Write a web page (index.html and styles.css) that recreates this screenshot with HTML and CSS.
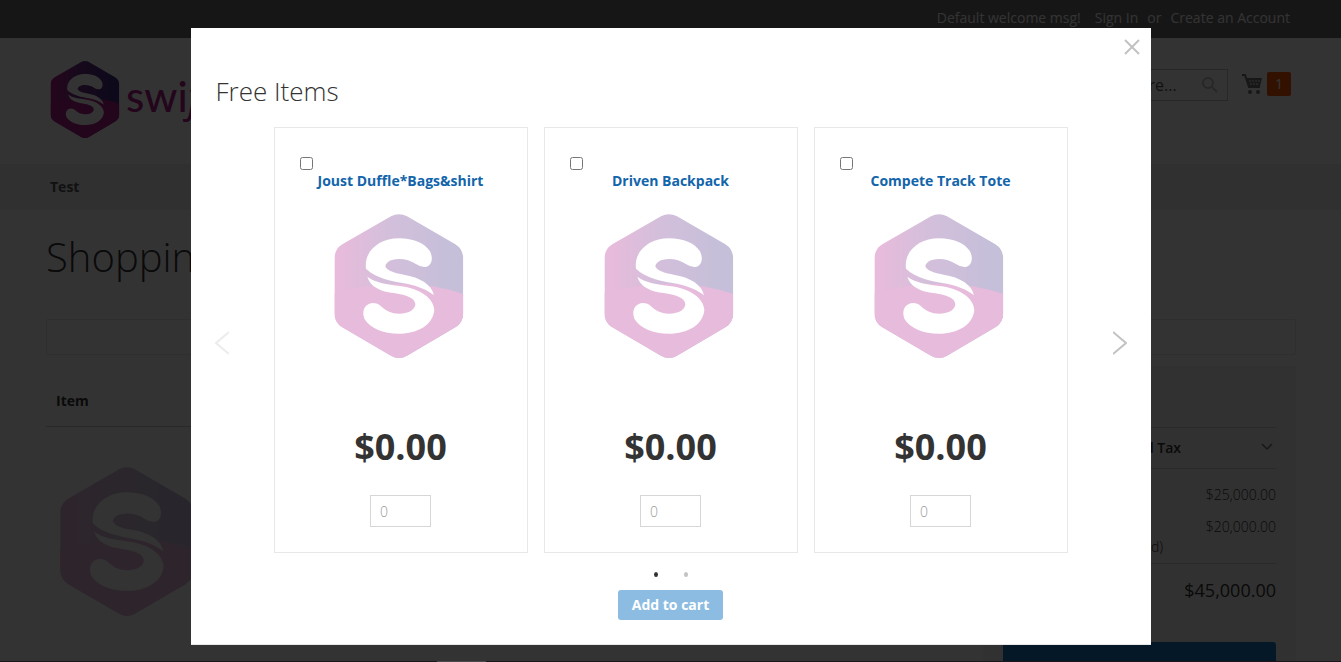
FILE: index.html
```html
<!DOCTYPE html>
<html lang="en">
<head>
  <meta charset="UTF-8">
  <meta name="viewport" content="width=device-width, initial-scale=1.0">
  <title>Shopping Cart</title>
  <link rel="stylesheet" href="styles.css">
</head>
<body>
  <!-- shared shapes -->
  <svg class="sprite" width="0" height="0" aria-hidden="true">
    <defs>
      <linearGradient id="logo-top" x1="0" y1="0" x2="1" y2="0">
        <stop offset="0.05" stop-color="#b2208a"/>
        <stop offset="0.4" stop-color="#74308a"/>
        <stop offset="0.9" stop-color="#412d84"/>
      </linearGradient>
      <clipPath id="logo-hex">
        <path d="M184 35 Q208 22 232 35 L377 119 Q401 134 401 164 V324 Q401 353 377 368 L232 453 Q208 467 184 453 L38 368 Q14 353 14 324 V164 Q14 134 38 119 Z"/>
      </clipPath>
    </defs>
    <symbol id="logo" viewBox="14 28 388 432">
      <g clip-path="url(#logo-hex)">
        <rect x="14" y="28" width="388" height="432" fill="url(#logo-top)"/>
        <path fill="#b2208a" d="M14 266 Q110 237 208 237 Q310 237 402 268 V460 H14 Z"/>
        <path fill="#fff" d="M109 192 C102 140 148 101 208 101 C252 101 285 116 301 140 C314 166 302 187 284 187 Q272 187 260 179 C243 168 228 163 208 163 C182 163 168 174 167 185 C172 200 200 206 222 210 C272 218 307 240 313 272 C290 254 268 246 235 238 C190 230 140 222 109 192 Z"/>
        <path fill="#fff" d="M113 216 C140 236 172 238 210 244 C275 252 311 282 314 315 C311 360 264 387 208 387 C160 387 120 370 104 342 C94 314 110 295 130 295 Q144 295 154 305 C170 320 186 327 208 327 C240 327 257 313 257 298 C254 279 230 272 196 266 C150 260 122 246 113 216 Z"/>
      </g>
    </symbol>
  </svg>

  <div class="page">
    <div class="panel">
      <span>Default welcome msg!</span>
      <a href="#">Sign In</a>
      <span class="or">or</span>
      <a href="#">Create an Account</a>
    </div>

    <header class="header">
      <a class="brand" href="#">
        <svg class="brand-icon"><use href="#logo"/></svg>
        <span class="brand-name">swi<i>f</i>t</span>
      </a>
      <div class="header-tools">
        <div class="search">
          <input type="text" placeholder="Search entire store here..." aria-label="Search">
          <button type="button" aria-label="Search">
            <svg width="16" height="16" viewBox="0 0 16 16" fill="none" stroke="#c2c2c2" stroke-width="2">
              <circle cx="6" cy="6" r="5"/>
              <path d="M10 10 L15 15"/>
            </svg>
          </button>
        </div>
        <a class="minicart" href="#">
          <svg width="20" height="22" viewBox="0 0 20 22">
            <path d="M0 2 H3 L7 14 H18" fill="none" stroke="#757575" stroke-width="2"/>
            <path d="M4 5 H20 L18 13 H7 Z" fill="#757575"/>
            <path d="M7 8 H18 M8 11 H17" stroke="#fff" stroke-width="1" stroke-dasharray="2 1"/>
            <circle cx="8" cy="19" r="2" fill="#757575"/>
            <circle cx="16" cy="19" r="2" fill="#757575"/>
          </svg>
          <span class="counter">1</span>
        </a>
      </div>
    </header>

    <nav class="nav"><a href="#">Test</a></nav>

    <main class="main">
      <h1>Shopping Cart</h1>
      <div class="message"></div>
      <div class="cart">
        <table class="items">
          <tr><th>Item</th></tr>
          <tr><td><svg class="item-photo"><use href="#logo"/></svg></td></tr>
        </table>
        <aside class="summary">
          <h2>Summary</h2>
          <button type="button" class="estimate">
            Estimate Shipping and Tax
            <svg width="12" height="8" viewBox="0 0 12 8" fill="none" stroke="#757575" stroke-width="1.5"><path d="M1 1 L6 6 L11 1"/></svg>
          </button>
          <table class="totals">
            <tr><th>Subtotal</th><td>$25,000.00</td></tr>
            <tr><th>Shipping<br>(Flat Rate Options - Fixed)</th><td>$20,000.00</td></tr>
            <tr class="grand"><th>Order Total</th><td>$45,000.00</td></tr>
          </table>
          <button type="button" class="checkout" aria-label="Proceed to Checkout"></button>
        </aside>
      </div>
    </main>
  </div>

  <div class="overlay">
    <div class="modal" role="dialog" aria-labelledby="modal-title">
      <button type="button" class="close" aria-label="Close">
        <svg width="16" height="16" viewBox="0 0 16 16" stroke="#c2c2c2" stroke-width="2"><path d="M1 1 L15 15 M15 1 L1 15"/></svg>
      </button>
      <h2 id="modal-title">Free Items</h2>

      <div class="slider">
        <button type="button" class="arrow" aria-label="Previous" disabled>
          <svg width="14" height="24" viewBox="0 0 14 24" fill="none" stroke="#c2c2c2" stroke-width="2"><path d="M14 1 L1 12 L14 23"/></svg>
        </button>
        <div class="cards">
          <div class="card">
            <input type="checkbox" id="item1">
            <label for="item1"><a href="#">Joust Duffle*Bags&amp;shirt</a></label>
            <svg class="photo"><use href="#logo"/></svg>
            <div class="price">$0.00</div>
            <input type="text" class="qty" placeholder="0" aria-label="Quantity">
          </div>
          <div class="card">
            <input type="checkbox" id="item2">
            <label for="item2"><a href="#">Driven Backpack</a></label>
            <svg class="photo"><use href="#logo"/></svg>
            <div class="price">$0.00</div>
            <input type="text" class="qty" placeholder="0" aria-label="Quantity">
          </div>
          <div class="card">
            <input type="checkbox" id="item3">
            <label for="item3"><a href="#">Compete Track Tote</a></label>
            <svg class="photo"><use href="#logo"/></svg>
            <div class="price">$0.00</div>
            <input type="text" class="qty" placeholder="0" aria-label="Quantity">
          </div>
        </div>
        <button type="button" class="arrow" aria-label="Next">
          <svg width="14" height="24" viewBox="0 0 14 24" fill="none" stroke="#c2c2c2" stroke-width="2"><path d="M0 1 L13 12 L0 23"/></svg>
        </button>
      </div>

      <div class="dots">
        <button type="button" class="dot active" aria-label="Page 1"></button>
        <button type="button" class="dot" aria-label="Page 2"></button>
      </div>
      <button type="button" class="add">Add to cart</button>
    </div>
  </div>
  <div class="bottom-strip"><span></span></div>
</body>
</html>
```

FILE: styles.css
```css
* {
  box-sizing: border-box;
}
body {
  margin: 0;
  height: 100vh;
  overflow: hidden;
  font-family: "Open Sans", "Noto Sans", sans-serif;
  font-size: 14px;
  line-height: 20px;
  color: #333;
  background: #fff;
}
h1, h2 {
  margin: 0;
  font-weight: 300;
}
a {
  text-decoration: none;
}
button, input {
  font-family: inherit;
  font-size: 14px;
}
button {
  padding: 0;
  border: none;
  background: none;
  cursor: pointer;
}
.sprite {
  position: absolute;
}

/* page behind the popup */
.page {
  height: 100%;
  overflow: hidden;
}
.panel {
  display: flex;
  justify-content: flex-end;
  height: 38px;
  padding: 8px 51px 0;
  background: #6e716e;
  color: #fff;
}
.panel a {
  color: #fff;
  margin-left: 14px;
}
.panel .or {
  margin-left: 9px;
}
.panel .or + a {
  margin-left: 9px;
}
.header {
  display: flex;
  justify-content: space-between;
  height: 126px;
  padding: 23px 50px 0;
}
.brand {
  display: flex;
  height: 80px;
  gap: 6px;
}
.brand-icon {
  width: 70px;
  height: 77px;
}
.brand-name {
  font-family: Lato, sans-serif;
  font-size: 42px;
  font-weight: 500;
  line-height: 70px;
  color: #b2208a;
}
.brand-name i {
  font-family: "Open Sans", sans-serif;
}
.header-tools {
  display: flex;
  align-items: flex-start;
  gap: 14px;
  padding-top: 8px;
}
.search {
  display: flex;
  align-items: center;
  width: 256px;
  height: 32px;
  padding: 0 9px;
  border: 1px solid #c2c2c2;
}
.search input {
  flex: 1;
  min-width: 0;
  border: none;
  outline: none;
  font-size: 16px;
}
.search input::placeholder {
  color: #575757;
}
.search button {
  height: 16px;
}
.minicart {
  display: flex;
  align-items: center;
  gap: 5px;
  padding-top: 3px;
}
.counter {
  width: 24px;
  height: 24px;
  border-radius: 2px;
  background: #ff5501;
  color: #fff;
  line-height: 24px;
  text-align: center;
}
.nav {
  height: 46px;
  padding: 0 50px;
  background: #f0f0f0;
  line-height: 46px;
}
.nav a {
  color: #575757;
  font-weight: 700;
}
.main {
  padding: 24px 45px 0 46px;
}
.main h1 {
  font-size: 40px;
  line-height: 46px;
}
.message {
  height: 36px;
  margin: 39px 0 11px;
  border: 1px solid #e8e8e8;
  border-radius: 2px;
}
.cart {
  display: flex;
  justify-content: space-between;
  gap: 24px;
}
.items {
  flex: 1;
  border-collapse: collapse;
  align-self: flex-start;
}
.items th {
  height: 60px;
  padding: 10px 10px 0;
  border-bottom: 1px solid #ccc;
  text-align: left;
}
.items td {
  padding: 40px 14px;
}
.item-photo {
  display: block;
  width: 134px;
  height: 149px;
  opacity: 0.3;
}
.summary {
  width: 313px;
  height: 360px;
  padding: 20px;
  background: #f5f5f5;
}
.summary h2 {
  height: 41px;
  font-size: 24px;
  line-height: 32px;
}
.estimate {
  display: flex;
  justify-content: space-between;
  align-items: center;
  width: 100%;
  height: 42px;
  padding: 0 3px 2px 0;
  border-top: 1px solid #d1d1d1;
  border-bottom: 1px solid #d1d1d1;
  color: #333;
  font-weight: 600;
}
.totals {
  width: 100%;
  margin-top: 10px;
  border-collapse: collapse;
}
.totals th {
  padding: 6px 0;
  font-weight: 300;
  text-align: left;
}
.totals td {
  padding: 6px 0;
  text-align: right;
  vertical-align: top;
  font-weight: 300;
}
.totals .grand th,
.totals .grand td {
  padding-top: 16px;
  border-top: 1px solid #d1d1d1;
  font-size: 18px;
  font-weight: 500;
}
.checkout {
  width: 100%;
  height: 48px;
  margin-top: 36px;
  border-radius: 3px;
  background: #1979c3;
}

/* popup */
.overlay {
  position: fixed;
  inset: 0;
  padding-top: 28px;
  background: rgba(0, 0, 0, 0.8);
}
.modal {
  position: relative;
  max-width: 960px;
  margin: 0 auto;
  padding: 45px 24px 24px;
  border-bottom: 1px solid #e8e8e8;
  background: #fff;
}
.close {
  position: absolute;
  top: 11px;
  right: 11px;
  width: 16px;
  height: 16px;
}
.modal h2 {
  margin-left: 1px;
  font-size: 26px;
  line-height: 36px;
}
.slider {
  display: flex;
  justify-content: space-between;
  align-items: center;
  margin-top: 18px;
}
.arrow {
  height: 30px;
  width: 14px;
  padding-top: 6px;
}
.arrow:disabled {
  opacity: 0.3;
}
.cards {
  display: grid;
  grid-template-columns: repeat(3, 1fr);
  gap: 16px;
  width: 794px;
}
.card {
  display: flex;
  flex-direction: column;
  align-items: center;
  padding: 29px 25px 25px;
  border: 1px solid #e8e8e8;
}
.card input[type="checkbox"] {
  align-self: flex-start;
  width: 13px;
  height: 13px;
  margin: 0;
}
.card label {
  margin-top: 1px;
  font-weight: 700;
}
.card label a {
  color: #1265ab;
}
.photo {
  width: 130px;
  height: 144px;
  margin: 23px 4px 0 0;
  opacity: 0.3;
}
.price {
  margin-top: 64px;
  font-size: 36px;
  font-weight: 700;
  line-height: 50px;
}
.qty {
  width: 61px;
  height: 32px;
  margin-top: 23px;
  padding: 0 9px;
  border: 1px solid #d6d6d6;
  font-weight: 300;
}
.qty::placeholder {
  color: #999;
}
.dots {
  display: flex;
  justify-content: center;
  gap: 26px;
  margin: 19px 0 13px;
}
.dot {
  width: 4px;
  height: 5px;
  border-radius: 50%;
  background: #c2c2c2;
}
.dot.active {
  background: #333;
}
.add {
  display: block;
  height: 30px;
  margin: 0 auto;
  padding: 0 14px 2px;
  border-radius: 3px;
  background: #8cbce1;
  color: #fff;
  font-weight: 700;
}
.bottom-strip {
  position: fixed;
  left: 0;
  right: 0;
  bottom: 0;
  height: 1px;
  padding-left: 437px;
  background: #1c161d;
}
.bottom-strip span {
  display: block;
  width: 49px;
  height: 1px;
  background: #4a4a4a;
}
```
